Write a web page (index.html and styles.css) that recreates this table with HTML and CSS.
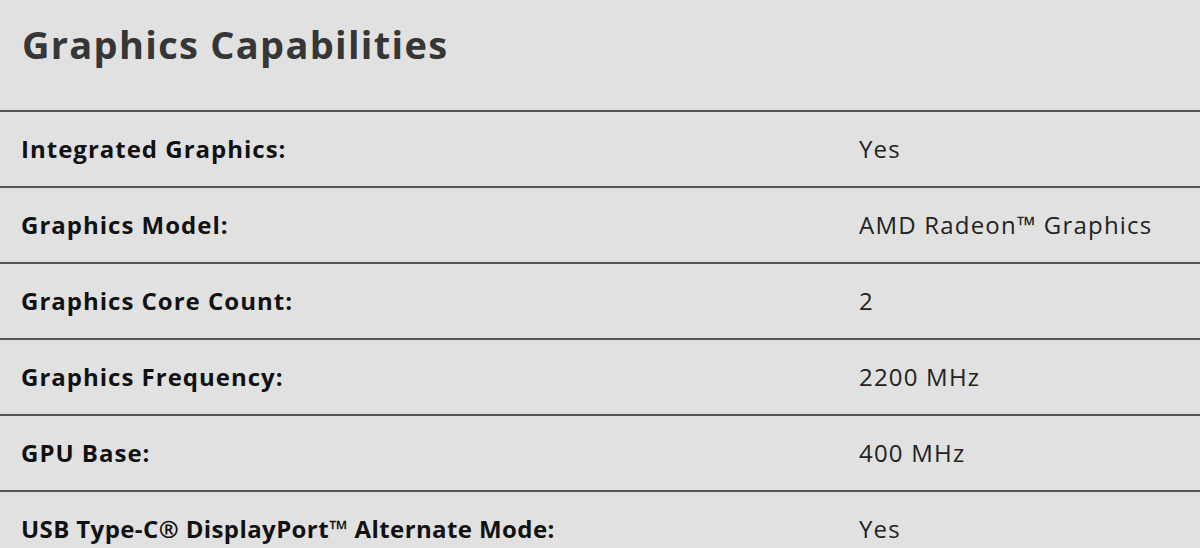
FILE: index.html
```html
<!DOCTYPE html>
<html>
<head>
<meta charset="utf-8">
<link rel="stylesheet" href="styles.css">
</head>
<body>
<section class="specs">
  <h2 class="specs-title">Graphics Capabilities</h2>
  <div class="spec-row"><div class="spec-label">Integrated Graphics:</div><div class="spec-value">Yes</div></div>
  <div class="spec-row"><div class="spec-label">Graphics Model:</div><div class="spec-value">AMD Radeon™ Graphics</div></div>
  <div class="spec-row"><div class="spec-label">Graphics Core Count:</div><div class="spec-value">2</div></div>
  <div class="spec-row"><div class="spec-label">Graphics Frequency:</div><div class="spec-value">2200 MHz</div></div>
  <div class="spec-row"><div class="spec-label">GPU Base:</div><div class="spec-value">400 MHz</div></div>
  <div class="spec-row"><div class="spec-label spec-label--tight">USB Type-C® DisplayPort™ Alternate Mode:</div><div class="spec-value">Yes</div></div>
</section>
</body>
</html>
```
FILE: styles.css
```css
html, body {
  margin: 0;
  padding: 0;
  background: #e1e1e1;
  font-family: "Open Sans", "Liberation Sans", sans-serif;
}
.specs {
  width: 1200px;
  height: 548px;
  overflow: hidden;
}
.specs-title {
  margin: 0;
  height: 110px;
  box-sizing: border-box;
  padding: 18px 0 0 22px;
  font-size: 38px;
  font-weight: 700;
  letter-spacing: 1.3px;
  color: #363636;
  line-height: 52px;
}
.spec-row {
  display: flex;
  align-items: center;
  height: 76px;
  box-sizing: border-box;
  border-top: 2px solid #555;
  padding-bottom: 2px;
}
.spec-label {
  width: 859px;
  padding-left: 21px;
  box-sizing: border-box;
  font-size: 24px;
  font-weight: 700;
  letter-spacing: 1px;
  color: #111;
}
.spec-label--tight {
  letter-spacing: 0.4px;
}
.spec-value {
  font-size: 24px;
  font-weight: 400;
  letter-spacing: 1.2px;
  color: #222;
}
```
